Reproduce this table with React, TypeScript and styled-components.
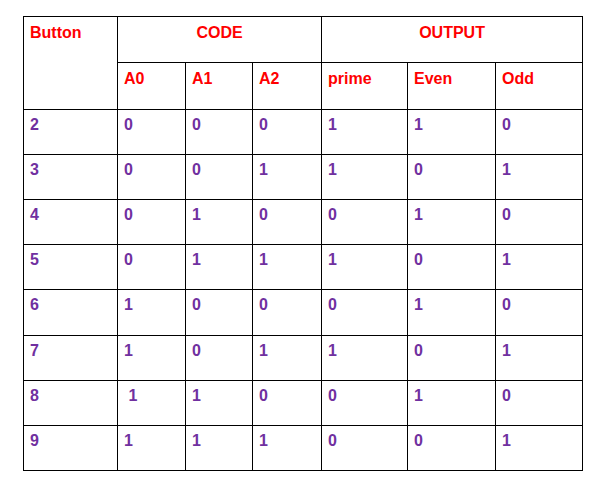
import React from "react";
import styled, { createGlobalStyle } from "styled-components";

const Global = createGlobalStyle`
  html, body { margin: 0; padding: 0; background: #ffffff; }
  body { font-family: "Liberation Sans", Arial, sans-serif; }
`;

const Page = styled.div`
  padding: 16px 0 0 23px;
`;

const Table = styled.table`
  border-collapse: separate;
  border-spacing: 0;
  table-layout: fixed;
  width: 560px;
  border-top: 1px solid #000;
  border-left: 1px solid #000;
`;

const Cell = styled.td<{ $h: number; $center?: boolean; $head?: boolean }>`
  box-sizing: border-box;
  height: ${(p) => p.$h}px;
  border-right: 1px solid #000;
  border-bottom: 1px solid #000;
  padding: ${(p) => (p.$head ? 7 : 6)}px 6px 0 6px;
  vertical-align: top;
  text-align: ${(p) => (p.$center ? "center" : "left")};
  font-family: "Liberation Sans", Arial, sans-serif;
  font-weight: bold;
  font-size: 16px;
  line-height: 18px;
  color: ${(p) => (p.$head ? "#ff0000" : "#7030a0")};
  white-space: pre;
`;

const widths = [94, 68, 67, 69, 86, 88, 87];

const rows: { h: number; v: string[] }[] = [
  { h: 45, v: ["2", "0", "0", "0", "1", "1", "0"] },
  { h: 45, v: ["3", "0", "0", "1", "1", "0", "1"] },
  { h: 45, v: ["4", "0", "1", "0", "0", "1", "0"] },
  { h: 45, v: ["5", "0", "1", "1", "1", "0", "1"] },
  { h: 46, v: ["6", "1", "0", "0", "0", "1", "0"] },
  { h: 45, v: ["7", "1", "0", "1", "1", "0", "1"] },
  { h: 45, v: ["8", "\u00a01", "1", "0", "0", "1", "0"] },
  { h: 45, v: ["9", "1", "1", "1", "0", "0", "1"] },
];

export default function App() {
  return (
    <>
      <Global />
      <Page>
        <Table>
          <colgroup>
            {widths.map((w, i) => (
              <col key={i} style={{ width: w }} />
            ))}
          </colgroup>
          <thead>
            <tr>
              <Cell as="th" $h={93} $head rowSpan={2}>
                Button
              </Cell>
              <Cell as="th" $h={46} $head $center colSpan={3}>
                CODE
              </Cell>
              <Cell as="th" $h={46} $head $center colSpan={3}>
                OUTPUT
              </Cell>
            </tr>
            <tr>
              {["A0", "A1", "A2", "prime", "Even", "Odd"].map((t) => (
                <Cell as="th" key={t} $h={47} $head>
                  {t}
                </Cell>
              ))}
            </tr>
          </thead>
          <tbody>
            {rows.map((r, i) => (
              <tr key={i}>
                {r.v.map((v, j) => (
                  <Cell key={j} $h={r.h}>
                    {v}
                  </Cell>
                ))}
              </tr>
            ))}
          </tbody>
        </Table>
      </Page>
    </>
  );
}
